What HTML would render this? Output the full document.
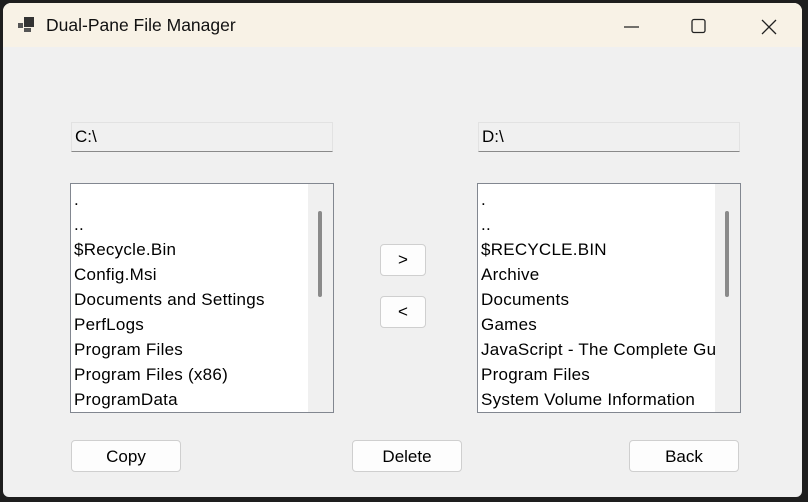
<!DOCTYPE html>
<html><head><style>
body{margin:0;width:808px;height:502px;background:#1e1e1e;position:relative;overflow:hidden;font-family:"Segoe UI","Liberation Sans",sans-serif;}
.win{position:absolute;left:3px;top:3px;width:799px;height:494px;background:#f0f0f0;border-radius:8px 8px 6px 6px;overflow:hidden;}
.tb{position:absolute;left:0;top:0;width:100%;height:44px;background:#f8f2e6;}
.title{position:absolute;left:43px;top:12px;font-size:17.5px;color:#111;}
.a{position:absolute;}
.txt{background:#f0f0f0;border:1px solid #e2e2e2;border-bottom:1px solid #8a8a8a;font-size:17px;color:#000;box-sizing:border-box;padding:4px 0 0 3px;}
.list{background:#fff;border:1px solid #828790;box-sizing:border-box;overflow:hidden;}
.it{position:absolute;left:3px;font-size:17px;letter-spacing:.25px;color:#000;white-space:nowrap;}
.sb{position:absolute;top:0;right:0;width:25px;height:100%;background:#f0f0f0;}
.th{position:absolute;left:10px;top:27px;width:4px;height:86px;background:#8a8a8a;border-radius:2px;}
.btn{background:#fdfdfd;border:1px solid #cfcfcf;border-radius:4px;box-sizing:border-box;font-size:17px;text-align:center;color:#000;}
</style></head><body>
<div class="win">
<div class="tb">
<svg class="a" style="left:15px;top:14px" width="18" height="16" viewBox="0 0 18 16"><rect x="6" y="0" width="10" height="10" fill="#333"/><rect x="0" y="6" width="5" height="5" fill="#555"/><rect x="6" y="11" width="7" height="4" fill="#555"/></svg>
<div class="title">Dual-Pane File Manager</div>
<svg class="a" style="left:617px;top:14px" width="160" height="18"><line x1="4" y1="10" x2="19" y2="10" stroke="#222" stroke-width="1.2"/><rect x="72" y="2.5" width="13" height="13" rx="2" fill="none" stroke="#222" stroke-width="1.3"/><path d="M142 3L156 17M156 3L142 17" stroke="#222" stroke-width="1.3"/></svg>
</div>
<div class="a txt" style="left:68px;top:119px;width:262px;height:30px">C:\</div>
<div class="a txt" style="left:475px;top:119px;width:262px;height:30px">D:\</div>
<div class="a list" style="left:67px;top:180px;width:264px;height:230px">
<div class="it" style="top:6px">.</div><div class="it" style="top:31px">..</div><div class="it" style="top:56px">$Recycle.Bin</div><div class="it" style="top:81px">Config.Msi</div><div class="it" style="top:106px">Documents and Settings</div><div class="it" style="top:131px">PerfLogs</div><div class="it" style="top:156px">Program Files</div><div class="it" style="top:181px">Program Files (x86)</div><div class="it" style="top:206px">ProgramData</div>
<div class="sb"><div class="th"></div></div></div>
<div class="a list" style="left:474px;top:180px;width:264px;height:230px">
<div class="it" style="top:6px">.</div><div class="it" style="top:31px">..</div><div class="it" style="top:56px">$RECYCLE.BIN</div><div class="it" style="top:81px">Archive</div><div class="it" style="top:106px">Documents</div><div class="it" style="top:131px">Games</div><div class="it" style="top:156px">JavaScript - The Complete Guide</div><div class="it" style="top:181px">Program Files</div><div class="it" style="top:206px">System Volume Information</div>
<div class="sb"><div class="th"></div></div></div>
<div class="a btn" style="left:377px;top:241px;width:46px;height:32px;line-height:30px">&gt;</div>
<div class="a btn" style="left:377px;top:293px;width:46px;height:32px;line-height:30px">&lt;</div>
<div class="a btn" style="left:68px;top:437px;width:110px;height:32px;line-height:32px">Copy</div>
<div class="a btn" style="left:349px;top:437px;width:110px;height:32px;line-height:32px">Delete</div>
<div class="a btn" style="left:626px;top:437px;width:110px;height:32px;line-height:32px">Back</div>
</div>
</body></html>
